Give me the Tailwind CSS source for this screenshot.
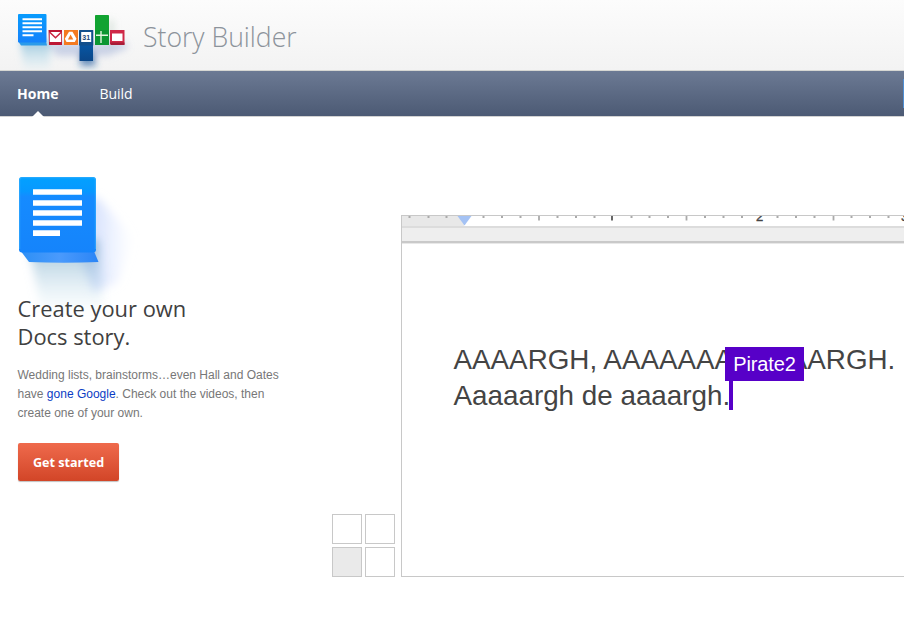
<!DOCTYPE html>
<html lang="en">
<head>
  <meta charset="UTF-8" />
  <meta name="viewport" content="width=device-width, initial-scale=1.0"/>
  <title>Story Builder</title>
  <script src="https://cdn.jsdelivr.net/npm/@tailwindcss/browser@4"></script>
</head>
<body class="h-screen overflow-hidden bg-white font-['Liberation_Sans',Arial,sans-serif]">

  <header class="flex h-[71px] border-b border-[#d6d7d3] bg-gradient-to-b from-[#fcfcfc] to-[#f3f3f3]">
    <svg class="block h-[70px] w-[143px] shrink-0" viewBox="0 0 143 70">
      <defs>
        <filter id="soft" x="-30%" y="-30%" width="160%" height="160%"><feGaussianBlur stdDeviation="3.5" /></filter>
        <linearGradient id="doc" x1="0" y1="0" x2="0" y2="1"><stop offset="0" stop-color="#079bfd" /><stop offset="1" stop-color="#1582fb" /></linearGradient>
        <linearGradient id="calSide" x1="0" y1="0" x2="0" y2="1"><stop offset="0" stop-color="#0757a4" /><stop offset="1" stop-color="#0b4688" /></linearGradient>
        <linearGradient id="docFall" x1="0" y1="0" x2="0" y2="1"><stop offset="0" stop-color="#7fb6d4" stop-opacity=".8" /><stop offset="1" stop-color="#bfe6f3" stop-opacity=".1" /></linearGradient>
      </defs>
      <g filter="url(#soft)">
        <path d="M20 40h30v30H24z" fill="url(#docFall)" />
        <path d="M48 42h78l2 6-20 8H56z" fill="#8a9ed0" opacity=".4" />
        <path d="M80 52h14l2 14H80z" fill="#1d5a9c" opacity=".65" />
        <path d="M108 20h6v26h-6z" fill="#9ab8a2" opacity=".3" />
      </g>
      <!-- docs -->
      <path d="M18 41h28l1 4.500H21z" fill="#2b9bea" />
      <rect x="18" y="14" width="28.500" height="28.500" rx="1" fill="url(#doc)" />
      <path d="M22.500 19.300h19.500M22.500 23.300h19.500M22.500 27.300h19.500M22.500 31.200h19.500M22.500 35.200h11" stroke="#fff" stroke-width="2" />
      <!-- mail -->
      <path d="M48.500 30h13.500v15H49z" fill="#bd1734" />
      <rect x="49.700" y="32" width="11.500" height="10" fill="#fff" />
      <path d="M49.500 32l6 5.800 6-5.800" fill="none" stroke="#c9233f" stroke-width="1.500" />
      <!-- drive -->
      <rect x="64" y="30" width="14" height="15" fill="#f47a20" />
      <path d="M69 31.800h3.500l4 7-1.700 3.200h-8.300l-1.700-3.200z" fill="#fff" />
      <path d="M70.600 34.600l2.700 4.800h-5.400z" fill="#f47a20" />
      <!-- calendar -->
      <rect x="79.500" y="44" width="13.500" height="17" fill="url(#calSide)" />
      <rect x="79" y="30" width="14.300" height="15.500" rx=".6" fill="#124f8c" />
      <rect x="81.200" y="32" width="10" height="10" fill="#fff" />
      <text x="86.200" y="39.700" text-anchor="middle" font-family="Liberation Sans, sans-serif" font-size="7" font-weight="700" fill="#174475">31</text>
      <!-- sheets -->
      <rect x="95" y="15" width="14" height="30" rx=".8" fill="#11a331" />
      <path d="M95 30h14v15H95z" fill="#0b9632" />
      <path d="M96 35.300h12M101 31v12" stroke="#e1f5df" stroke-width="1.400" />
      <!-- slides -->
      <path d="M110 30h14.500v14.500H110z" fill="#cf2847" />
      <path d="M110 42.500h14.500v2.500H111z" fill="#a81c37" />
      <rect x="112" y="33.500" width="10.500" height="7.500" fill="#fff" />
    </svg>
    <h1 class="pt-[19px] font-['Open_Sans',sans-serif] text-[26.600px] leading-9 font-light whitespace-nowrap text-[#8c939b]">Story Builder</h1>
  </header>

  <nav class="relative flex h-[46px] gap-[41px] border-b border-[#d2d2d2] bg-gradient-to-b from-[#6c7a94] to-[#4c5a74] pl-[17px] font-['Open_Sans',sans-serif] text-[14px] leading-[46px] text-white">
    <a href="#" class="font-bold">Home</a>
    <a href="#">Build</a>
    <svg class="absolute bottom-[-1px] left-8 h-[6px] w-3" viewBox="0 0 12 6"><path d="M0 6l6-6 6 6z" fill="#fff" /></svg>
    <span class="absolute top-2 right-0 h-[29px] w-px bg-[#4f8fd4]"></span>
  </nav>

  <main class="flex items-start">
    <section class="w-[332px] shrink-0 pt-[50px] pl-[17.500px]">
      <svg class="-ml-[0.500px] block h-[128px] w-[130px] overflow-visible" viewBox="17 167 130 128">
        <defs>
          <filter id="haze" x="-40%" y="-40%" width="180%" height="180%"><feGaussianBlur stdDeviation="5" /></filter>
          <linearGradient id="face" x1="0" y1="0" x2="0" y2="1"><stop offset="0" stop-color="#03a1ff" /><stop offset=".19" stop-color="#0798ff" /><stop offset=".26" stop-color="#158bff" /><stop offset="1" stop-color="#1584fb" /></linearGradient>
          <linearGradient id="side" x1="0" y1="0" x2="1" y2="0"><stop offset="0" stop-color="#2c8ff5" /><stop offset=".5" stop-color="#4a9afc" /><stop offset="1" stop-color="#2b85f6" /></linearGradient>
          <linearGradient id="fall" x1="0" y1="0" x2="0" y2="1"><stop offset="0" stop-color="#7fa9c6" stop-opacity=".8" /><stop offset="1" stop-color="#c8e6f3" stop-opacity="0" /></linearGradient>
          <linearGradient id="cast" x1="0" y1="0" x2="1" y2="0"><stop offset="0" stop-color="#bccdfb" stop-opacity=".8" /><stop offset=".45" stop-color="#cfdcfd" stop-opacity=".55" /><stop offset="1" stop-color="#e6eeff" stop-opacity="0" /></linearGradient>
        </defs>
        <path d="M82 198h16l36 40-16 44-24 10-12-30z" fill="url(#cast)" filter="url(#haze)" />
        <path d="M28 240h70l6 76H42z" fill="url(#fall)" filter="url(#haze)" />
        <path d="M20 250l9 12q35 1.500 69.500 0l-5-12z" fill="url(#side)" />
        <rect x="19" y="177" width="77" height="75.500" rx="3" fill="url(#face)" />
        <path d="M19.700 249V180q0-2.300 2.300-2.300h71q2.300 0 2.300 2.300v69" fill="none" stroke="#36adff" stroke-width=".8" />
        <path d="M33 192h49M33 203h49M33 213h49M33 223h49M33 233.200h27" stroke="#fff" stroke-width="5.700" />
      </svg>
      <h2 class="relative font-['Open_Sans',sans-serif] text-[21.900px] leading-7 text-[#404040]">Create your own<br />Docs story.</h2>
      <p class="mt-[15px] text-[12px] leading-[19px] whitespace-nowrap text-[#777]">Wedding lists, brainstorms…even Hall and Oates<br />have <a href="#" class="text-[#0b3cc4]">gone Google</a>. Check out the videos, then<br />create one of your own.</p>
      <a href="#" class="mt-5 ml-[0.500px] block h-[38px] w-[101px] rounded-[2px] bg-gradient-to-b from-[#ef6a4c] to-[#d24527] text-center font-['Open_Sans',sans-serif] text-[12.600px] leading-[39px] font-bold text-white shadow-[0_1px_1px_rgba(0,0,0,0.25)]">Get started</a>
    </section>

    <div class="mt-[397px] grid shrink-0 grid-cols-[30px_30px] gap-[3px]">
      <span class="h-[30px] border border-[#c8c8c8]"></span>
      <span class="h-[30px] border border-[#c8c8c8]"></span>
      <span class="h-[30px] border border-[#c8c8c8] bg-[#eaeaea]"></span>
      <span class="h-[30px] border border-[#c8c8c8]"></span>
    </div>

    <section class="mt-[98px] ml-[6px] h-[362px] w-[520px] shrink-0 overflow-hidden border border-[#c8c8c8]">
      <svg class="block h-[28px] w-[502px]" viewBox="402 216 502 28">
        <rect x="402" y="216" width="62" height="11" fill="#e8e8e8" />
        <path d="M402 227h502" stroke="#dcdcdc" stroke-width="2" />
        <rect x="402" y="228" width="502" height="13" fill="#eee" />
        <rect x="402" y="241" width="502" height="2" fill="#c9c9c9" />
        <rect x="402" y="243" width="502" height="1" fill="#e8e8e8" />
        <path d="M409.500 216v2M428.500 216v2M446.500 216v2M483.500 216v2M502 216v2M520.500 216v2M557.500 216v2M576 216v2M594.500 216v2M631.500 216v2M649.500 216v2M668 216v2M705 216v2M723.500 216v2M742 216v2M777.500 216v2M796 216v2M814.500 216v2M851.500 216v2M870 216v2M888.500 216v2" stroke="#aaa" stroke-width="2" />
        <path d="M539 216v4.500M686.500 216v4.500M833.500 216v4.500" stroke="#aaa" stroke-width="1.800" />
        <path d="M612 216v4.500" stroke="#666" stroke-width="2" />
        <g font-family="Liberation Sans, sans-serif" font-size="13" fill="#444" stroke="#444" stroke-width=".4">
          <text x="756" y="220.500">2</text>
          <text x="901" y="220.500">3</text>
        </g>
        <path d="M457.500 216h14l-7 9.500z" fill="#a4c2f4" />
      </svg>
      <div class="relative mt-[98px] ml-[51.500px] w-max text-[27.800px] leading-9 text-[#444]">
        <p>AAAARGH, AAAAAAAAAAAARGH.</p>
        <p>Aaaaargh de aaaargh.</p>
        <span class="absolute top-[5px] left-[271.500px] h-[34px] w-[79px] bg-[#5700c8] text-center text-[20px] leading-[34px] tracking-[-0.100px] text-white">Pirate2</span>
        <span class="absolute top-[39px] left-[275.500px] h-[29px] w-1 bg-[#5700c8]"></span>
      </div>
    </section>
  </main>

</body>
</html>
